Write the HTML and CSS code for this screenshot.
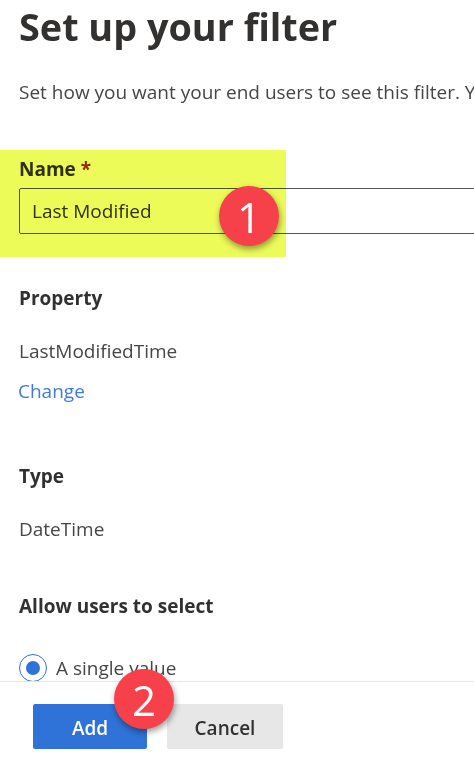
FILE: index.html
```html
<!DOCTYPE html>
<html lang="en">
<head>
    <meta charset="UTF-8">
    <meta name="viewport" content="width=device-width, initial-scale=1.0">
    <link rel="stylesheet" href="styles.css">
    <title>Set up your filter</title>
</head>
<body>

<div class="panel">
    <div class="content">
        <h1>Set up your filter</h1>
        <p class="intro">Set how you want your end users to see this filter. You can change these settings later.</p>

        <div class="field name-field">
            <label class="label">Name <span class="required">*</span></label>
            <div class="text-input">Last Modified</div>
        </div>

        <div class="field property-field">
            <div class="label">Property</div>
            <div class="value">LastModifiedTime</div>
            <a class="link">Change</a>
        </div>

        <div class="field type-field">
            <div class="label">Type</div>
            <div class="value">DateTime</div>
        </div>

        <div class="field select-field">
            <div class="label">Allow users to select</div>
            <div class="radio-row">
                <span class="radio"><span class="radio-dot"></span></span>
                <span class="radio-text">A single value</span>
            </div>
        </div>
    </div>

    <div class="footer">
        <button class="btn primary">Add</button>
        <button class="btn">Cancel</button>
    </div>

    <div class="highlight"></div>
    <div class="badge badge-one">1</div>
    <div class="badge badge-two">2</div>
</div>

</body>
</html>
```

FILE: styles.css
```css
body {
    font-family: "Open Sans", "Noto Sans", sans-serif;
    margin: 0;
    background-color: #ffffff;
    color: #323130;
}

.panel {
    position: relative;
    display: flex;
    flex-direction: column;
    width: 474px;
    height: 758px;
    overflow: hidden;
}

.content {
    height: 681px;
    overflow: hidden;
    padding-left: 19px;
    box-sizing: border-box;
}

h1 {
    margin: 0 0 2px;
    font-size: 37.8px;
    line-height: 53px;
    font-weight: 700;
    white-space: nowrap;
}

.intro {
    margin: 27px 0 0;
    font-size: 19px;
    line-height: 24px;
    color: #484644;
    white-space: nowrap;
}

.label {
    display: block;
    font-size: 19px;
    line-height: 24px;
    font-weight: 700;
}

.required {
    color: #a4262c;
}

.name-field {
    margin-top: 53px;
}

.text-input {
    width: 480px;
    height: 44px;
    margin-top: 7px;
    padding-left: 12px;
    border: 1px solid #555555;
    border-radius: 2px;
    font-size: 19px;
    line-height: 44px;
}

.property-field {
    margin-top: 52px;
}

.value {
    margin-top: 29px;
    font-size: 19px;
    line-height: 24px;
    color: #484644;
}

.link {
    display: block;
    margin: 16px 0 0 -1px;
    font-size: 19px;
    line-height: 24px;
    color: #3f7bdc;
}

.type-field {
    margin-top: 61px;
}

.select-field {
    margin-top: 53px;
}

.radio-row {
    display: flex;
    align-items: center;
    gap: 9px;
    margin-top: 36px;
}

.radio {
    display: flex;
    align-items: center;
    justify-content: center;
    width: 26px;
    height: 26px;
    border: 1px solid #2f72d8;
    border-radius: 50%;
    flex-shrink: 0;
}

.radio-dot {
    width: 14px;
    height: 14px;
    border-radius: 50%;
    background-color: #2f72d8;
}

.radio-text {
    font-size: 19px;
    line-height: 24px;
    color: #484644;
}

.footer {
    display: flex;
    gap: 20px;
    height: 77px;
    padding: 22px 0 0 33px;
    box-sizing: border-box;
    border-top: 1px solid #e6e6e6;
}

.btn {
    width: 116px;
    height: 45px;
    padding: 2px 0 0;
    border: none;
    border-radius: 2px;
    font-family: inherit;
    font-size: 19px;
    font-weight: 600;
    background-color: #e7e7e7;
    color: #323130;
}

.btn.primary {
    width: 114px;
    background-color: #2f72d8;
    color: #ffffff;
}

.highlight {
    position: absolute;
    left: 0;
    top: 150px;
    width: 286px;
    height: 107px;
    background-color: #ecfb58;
    mix-blend-mode: multiply;
}

.badge {
    position: absolute;
    display: flex;
    align-items: center;
    justify-content: center;
    width: 60px;
    height: 60px;
    border-radius: 50%;
    background-color: #f7414a;
    color: #ffffff;
    font-size: 42px;
    box-shadow: 1px 3px 6px rgba(0, 0, 0, 0.4);
}

.badge-one {
    left: 219px;
    top: 186px;
}

.badge-two {
    left: 114px;
    top: 669px;
}
```
